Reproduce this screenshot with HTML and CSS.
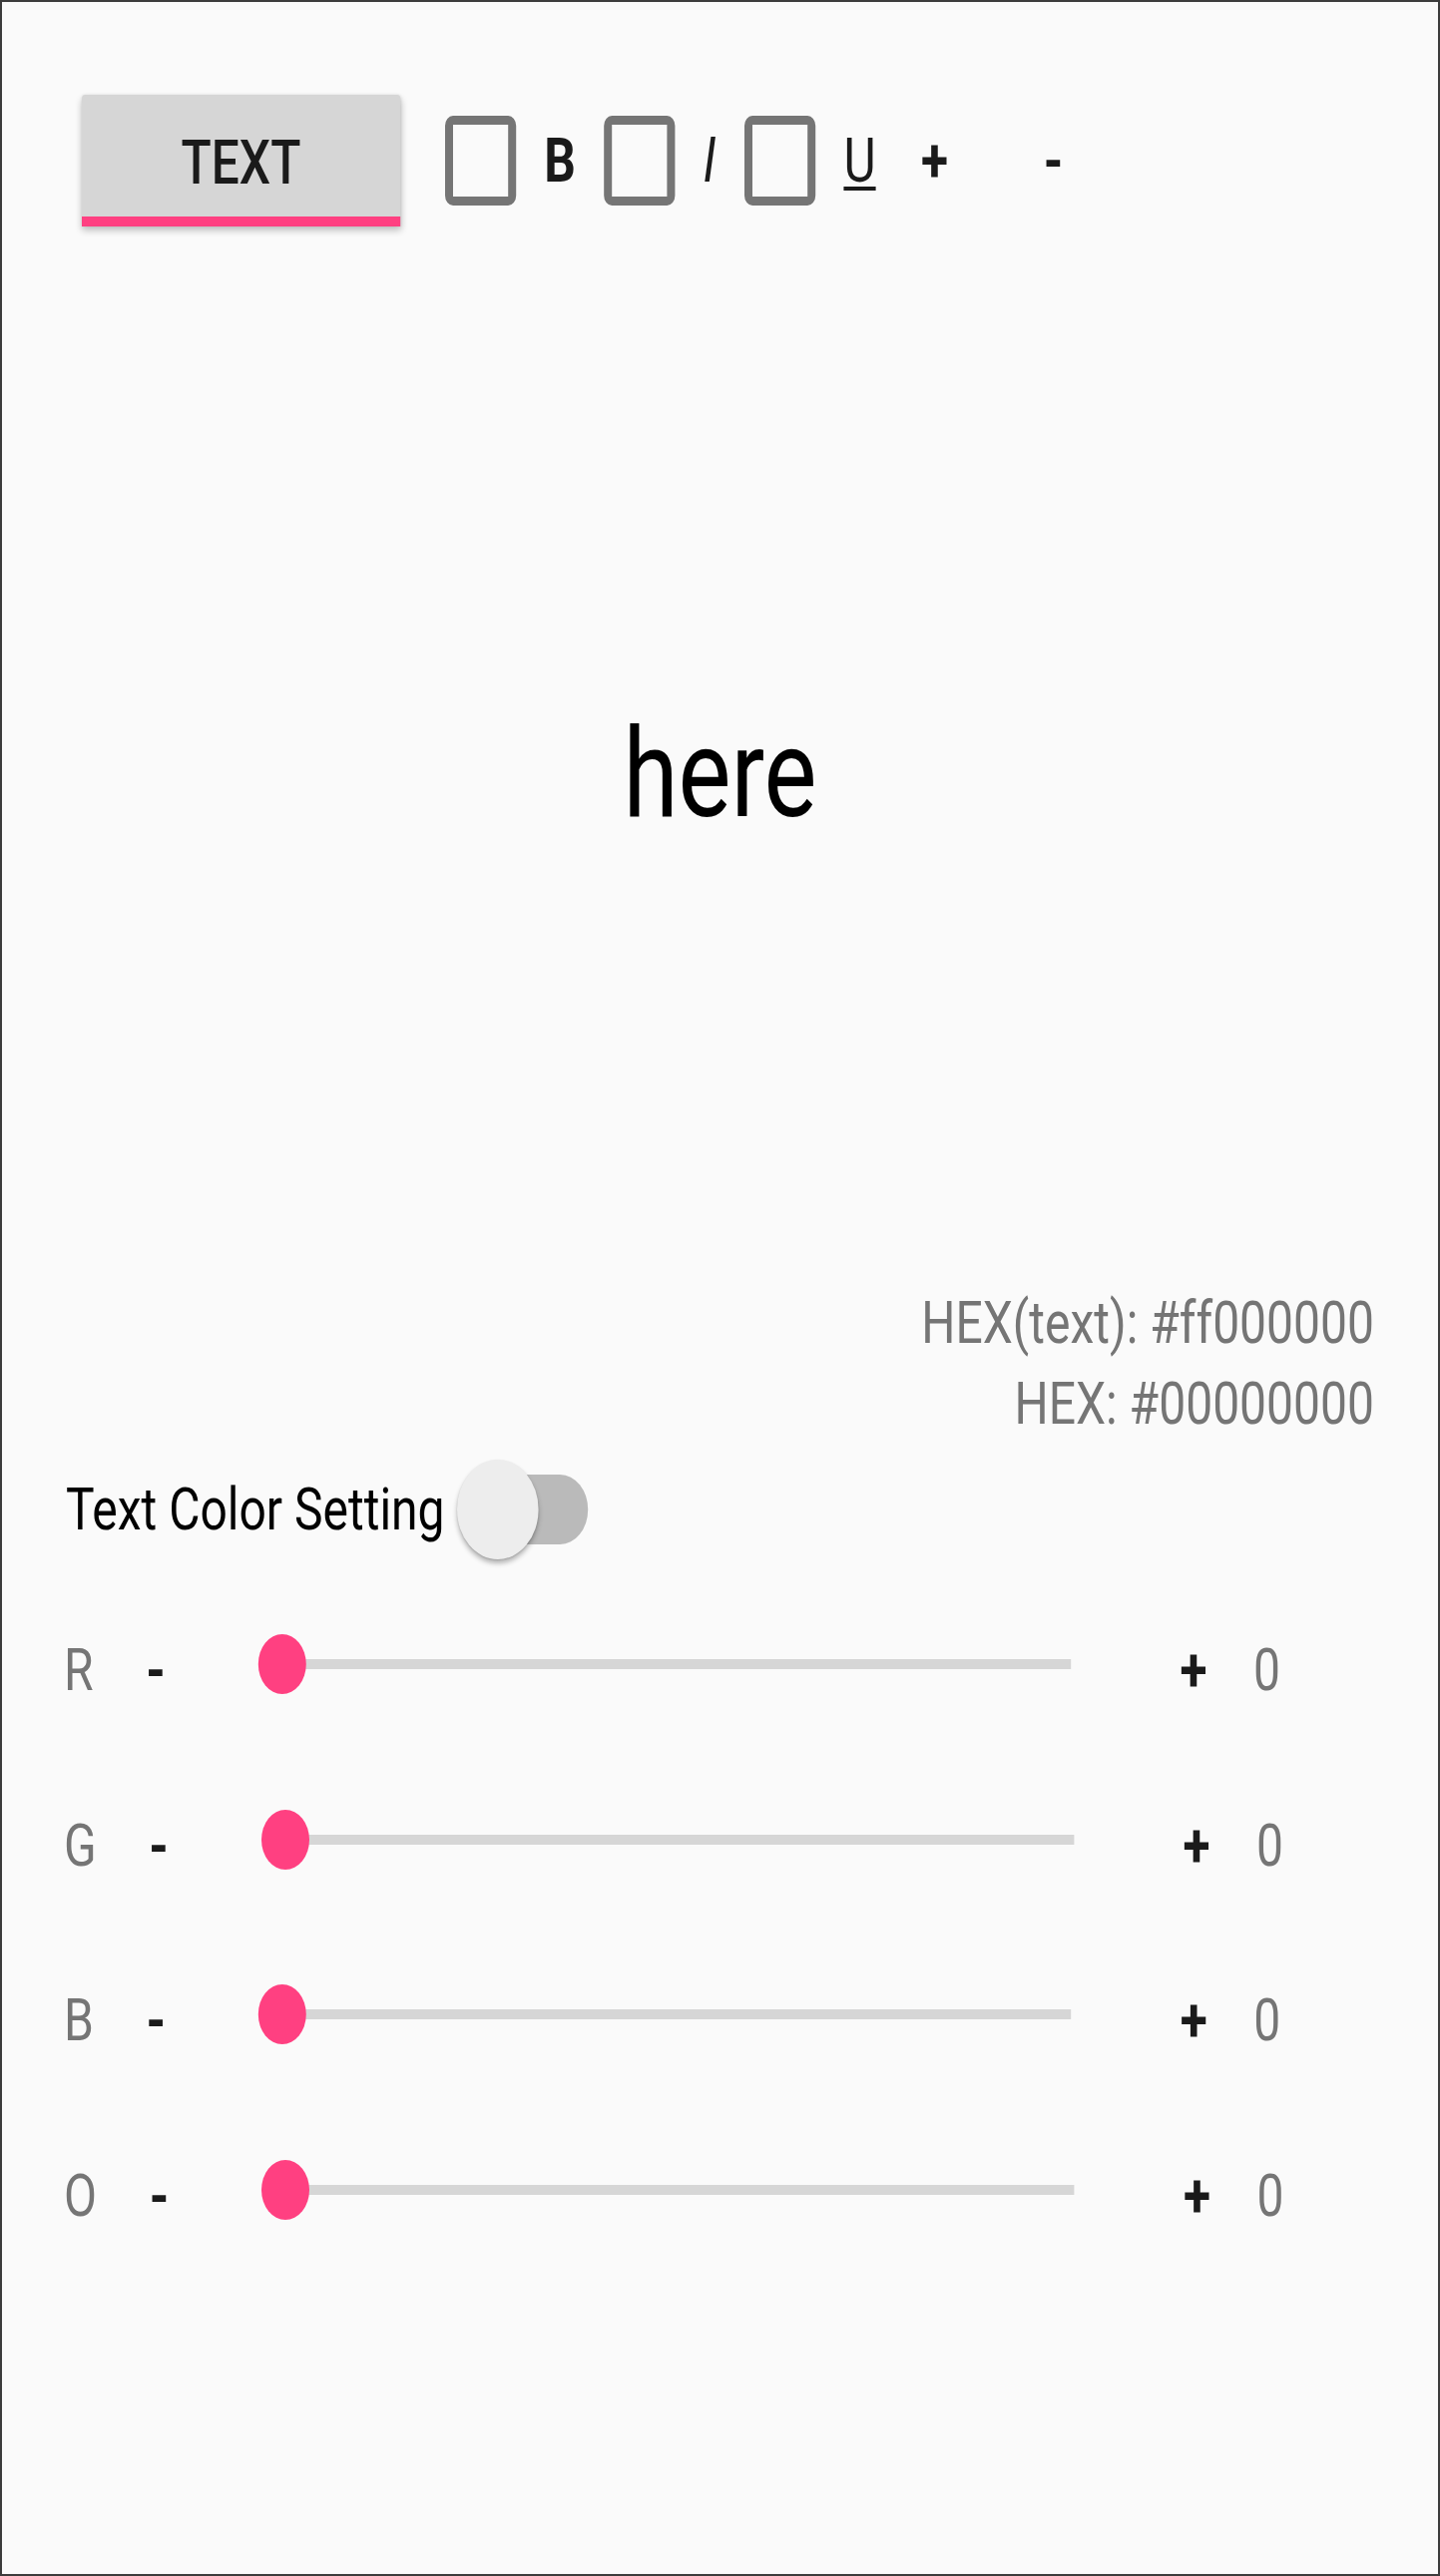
FILE: index.html
```html
<!DOCTYPE html>
<html lang="en">
<head>
<meta charset="utf-8">
<title>Text Color</title>
<link rel="stylesheet" href="styles.css">
</head>
<body>
<div class="frame">
  <div class="app">
    <div class="toolbar">
      <div class="tab">
        <span class="tab-label">TEXT</span>
        <span class="tab-ind"></span>
      </div>
      <span class="cb cb-first"></span><span class="opt opt-b">B</span>
      <span class="cb"></span><span class="opt opt-i">I</span>
      <span class="cb"></span><span class="opt opt-u">U</span>
      <span class="opt opt-plus">+</span>
      <span class="opt opt-minus">-</span>
    </div>

    <div class="preview">here</div>

    <div class="hex">
      <div>HEX(text): #ff000000</div>
      <div>HEX: #00000000</div>
    </div>

    <div class="setting">
      <span class="setting-label">Text Color Setting</span>
      <span class="switch"><span class="track"></span><span class="thumb"></span></span>
    </div>

    <div class="rows">
      <div class="row">
        <span class="lbl">R</span><span class="pm minus">-</span>
        <span class="slider"><span class="knob"></span></span>
        <span class="pm plus">+</span><span class="val">0</span>
      </div>
      <div class="row">
        <span class="lbl">G</span><span class="pm minus">-</span>
        <span class="slider"><span class="knob"></span></span>
        <span class="pm plus">+</span><span class="val">0</span>
      </div>
      <div class="row">
        <span class="lbl">B</span><span class="pm minus">-</span>
        <span class="slider"><span class="knob"></span></span>
        <span class="pm plus">+</span><span class="val">0</span>
      </div>
      <div class="row">
        <span class="lbl">O</span><span class="pm minus">-</span>
        <span class="slider"><span class="knob"></span></span>
        <span class="pm plus">+</span><span class="val">0</span>
      </div>
    </div>
  </div>
</div>
</body>
</html>
```

FILE: styles.css
```css
html, body {
  margin: 0;
  padding: 0;
  background: #fafafa;
}

.frame {
  width: 1443px;
  height: 2582px;
  box-sizing: border-box;
  border: 2px solid #3c3c3c;
  background: #fafafa;
  overflow: hidden;
}

/* the whole screen is horizontally condensed in the capture */
.app {
  width: 1798.75px;
  transform: scaleX(0.8);
  transform-origin: 0 0;
  font-family: Roboto, "Noto Sans", sans-serif;
  color: #000;
}

/* ---------- toolbar ---------- */
.toolbar {
  display: flex;
  align-items: center;
  padding-top: 93px;
  padding-left: 100px;
}

.tab {
  width: 398.75px;
  height: 132px;
  display: flex;
  flex-direction: column;
  align-items: center;
  background: #d6d6d6;
  border-radius: 4px 4px 0 0;
  box-shadow: 0 4px 8px rgba(0, 0, 0, 0.24), 0 0 3px rgba(0, 0, 0, 0.08);
  box-sizing: border-box;
  padding-top: 37px;
}

.tab-label {
  font-size: 62px;
  line-height: 1;
  font-weight: 500;
  color: #1a1a1a;
  height: 85px;
}

.tab-ind {
  align-self: stretch;
  height: 10px;
  background: #ff4081;
}

.cb {
  width: 89px;
  height: 90px;
  box-sizing: border-box;
  border-style: solid;
  border-color: #757575;
  border-width: 9.5px 10px;
  border-radius: 10px;
  background: #fafafa;
  flex: none;
}

.cb-first {
  margin-left: 56.25px;
}

.opt {
  font-size: 62px;
  line-height: 1;
  text-align: center;
  color: #1a1a1a;
  flex: none;
}

.opt-b { width: 109.75px; font-weight: 700; }
.opt-i { width: 87.25px; font-style: italic; }
.opt-u {
  width: 110.8px;
  text-decoration: underline;
  text-decoration-thickness: 4px;
  text-underline-offset: 5px;
}
.opt-plus { width: 76.4px; font-weight: 700; }
.opt-minus { width: 221.4px; font-weight: 700; }

/* ---------- preview ---------- */
.preview {
  padding-top: 486px;
  font-size: 125px;
  line-height: 125px;
  text-align: center;
  color: #000;
}

/* ---------- hex ---------- */
.hex {
  margin-top: 447px;
  padding-right: 80px;
  text-align: right;
  font-size: 60px;
  line-height: 81px;
  color: #757575;
}

/* ---------- switch ---------- */
.setting {
  margin-top: 16px;
  height: 100px;
  display: flex;
  align-items: center;
  padding-left: 80px;
}

.setting-label {
  font-size: 60px;
  line-height: 1;
  color: #000;
}

.switch {
  position: relative;
  width: 164px;
  height: 100px;
  margin-left: 16px;
  flex: none;
}

.track {
  position: absolute;
  left: 50px;
  top: 15px;
  width: 114px;
  height: 70px;
  border-radius: 35px;
  background: #bababa;
}

.thumb {
  position: absolute;
  left: 0;
  top: 0;
  width: 102px;
  height: 100px;
  border-radius: 50%;
  background: #ededed;
  box-shadow: 0 4px 6px rgba(0, 0, 0, 0.28), 0 1px 2px rgba(0, 0, 0, 0.12);
}

/* ---------- sliders ---------- */
.rows {
  margin-top: 23.25px;
  padding-left: 77.5px;
}

.row {
  height: 175.5px;
  display: flex;
  align-items: center;
}

.lbl {
  font-size: 60px;
  line-height: 1;
  color: #757575;
}

.pm {
  width: 60px;
  text-align: center;
  font-size: 62px;
  line-height: 1;
  font-weight: 700;
  color: #1a1a1a;
  flex: none;
}

.minus { margin-left: 48px; }
.plus { margin-left: 93.75px; }

.slider {
  position: relative;
  flex: none;
  width: 1047.75px;
  height: 60px;
  margin-left: 98.5px;
  margin-bottom: 12px;
}

.slider::before {
  content: "";
  position: absolute;
  left: 30px;
  right: 30px;
  top: 25px;
  height: 10px;
  background: #d6d6d6;
}

.knob {
  position: absolute;
  left: 0;
  top: 0;
  width: 60px;
  height: 60px;
  border-radius: 50%;
  background: #ff4081;
}

.val {
  margin-left: 45px;
  font-size: 60px;
  line-height: 1;
  color: #757575;
}
```
